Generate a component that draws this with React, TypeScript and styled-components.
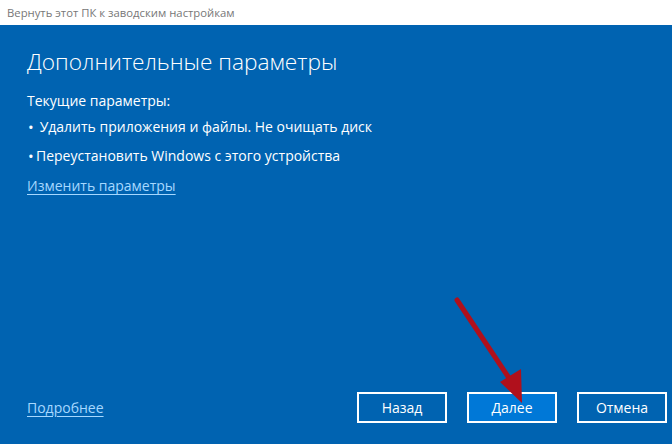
import React from "react";
import styled, { createGlobalStyle } from "styled-components";

const Global = createGlobalStyle`
  html, body { margin: 0; padding: 0; }
  body { width: 672px; height: 444px; overflow: hidden; font-family: "Open Sans", "Noto Sans", sans-serif; }
`;

const Window = styled.div`
  position: relative;
  width: 672px;
  height: 444px;
  display: flex;
  flex-direction: column;
`;

const TitleBar = styled.div`
  height: 25px;
  flex: none;
  background: #ffffff;
  color: #777777;
  font-size: 11.3px;
  line-height: 25px;
  padding-left: 7px;
  box-sizing: border-box;
  white-space: nowrap;
`;

const Main = styled.div`
  flex: 1;
  background: #0063b1;
  color: #ffffff;
  display: flex;
  flex-direction: column;
  padding: 0 5px 21px 27px;
`;

const Heading = styled.h1`
  margin: 21px 0 0;
  font-weight: 300;
  font-size: 22.7px;
  line-height: 32px;
`;

const Label = styled.div`
  margin-top: 13px;
  font-size: 14px;
  line-height: 20px;
`;

const Bullet = styled.div<{ $gap: number }>`
  margin-top: ${(p) => p.$gap}px;
  font-size: 14px;
  line-height: 20px;
  display: flex;
  &::before {
    content: "•";
    margin-left: 1px;
    width: 8px;
    font-size: 15px;
  }
`;

const Link = styled.a`
  color: #a6d8ff;
  font-size: 14px;
  line-height: 20px;
  text-decoration: underline;
  text-underline-offset: 3px;
  cursor: pointer;
`;

const LinkRow = styled.div`
  margin-top: 10px;
  font-size: 14px;
  line-height: 20px;
`;

const Spacer = styled.div`
  flex: 1;
`;

const Footer = styled.div`
  display: flex;
  align-items: center;
  justify-content: space-between;
`;

const Buttons = styled.div`
  display: flex;
  gap: 20px;
`;

const Button = styled.button<{ $primary?: boolean }>`
  width: 90px;
  height: 31px;
  box-sizing: border-box;
  border: 2px solid #ffffff;
  background: ${(p) => (p.$primary ? "#0078d7" : "transparent")};
  color: #ffffff;
  font-family: inherit;
  font-size: 14px;
  padding: 0;
`;

const Annotation = styled.svg`
  position: absolute;
  left: 0;
  top: 0;
  pointer-events: none;
`;

export default function App() {
  return (
    <>
      <Global />
      <Window>
        <TitleBar>Вернуть этот ПК к заводским настройкам</TitleBar>
        <Main>
          <Heading>Дополнительные параметры</Heading>
          <Label>Текущие параметры:</Label>
          <Bullet $gap={6}>&nbsp;Удалить приложения и файлы. Не очищать диск</Bullet>
          <Bullet $gap={9}>Переустановить Windows с этого устройства</Bullet>
          <LinkRow>
            <Link>Изменить параметры</Link>
          </LinkRow>
          <Spacer />
          <Footer>
            <Link>Подробнее</Link>
            <Buttons>
              <Button>Назад</Button>
              <Button $primary>Далее</Button>
              <Button>Отмена</Button>
            </Buttons>
          </Footer>
        </Main>
        <Annotation width="672" height="444" viewBox="0 0 672 444">
          <line x1="457" y1="300" x2="513" y2="384" stroke="#b0101c" strokeWidth="5" strokeLinecap="round" />
          <polygon points="522,403 500,382 521,369" fill="#b0101c" />
        </Annotation>
      </Window>
    </>
  );
}
